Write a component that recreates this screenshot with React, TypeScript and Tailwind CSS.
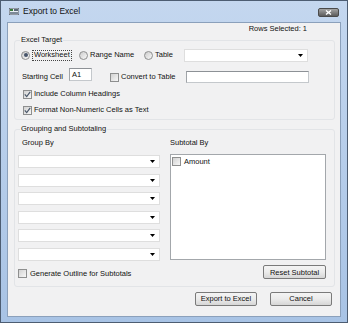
import React from "react";

function Check() {
  return (
    <svg width="7" height="7" viewBox="0 0 7 7">
      <path d="M0.8 3.4 L2.7 5.6 L6.2 0.9" fill="none" stroke="#4a586a" strokeWidth="1.2" />
    </svg>
  );
}

function CheckBox({ checked }: { checked?: boolean }) {
  return (
    <div className="w-[9px] h-[9px] shrink-0 border border-[#8e8f8f] bg-linear-to-br from-[#d2d2d2] to-[#f7f7f7] flex items-center justify-center">
      {checked && <Check />}
    </div>
  );
}

function Radio({ checked }: { checked?: boolean }) {
  return (
    <div className="w-[9px] h-[9px] shrink-0 rounded-full border border-[#8e8f8f] bg-linear-to-br from-[#cdcdcd] to-[#f8f8f8] flex items-center justify-center">
      {checked && <div className="w-[4px] h-[4px] rounded-full bg-[#46546a]" />}
    </div>
  );
}

function Arrow() {
  return (
    <svg width="5" height="3" viewBox="0 0 5 3">
      <path d="M0 0H5L2.5 3Z" fill="#000" />
    </svg>
  );
}

function Combo({ className }: { className: string }) {
  return (
    <div className={"h-[13px] bg-white border border-[#dedede] flex items-center justify-end pr-[4px] " + className}>
      <Arrow />
    </div>
  );
}

function Btn({ label, className }: { label: string; className: string }) {
  return (
    <div
      className={
        "h-[14px] rounded-[2px] border border-[#7a7a7a] bg-linear-to-b from-[#f4f4f4] via-[#ebebeb] to-[#d6d6d6] flex items-center justify-center leading-none " +
        className
      }
    >
      {label}
    </div>
  );
}

export default function App() {
  return (
    <div className="w-[348px] h-[323px] border border-[#4d5d72] bg-linear-to-b from-[#c4d7ef] to-[#a8c3e5] flex flex-col font-['Liberation_Sans',Arial,sans-serif] text-[7.5px] text-[#111]">
      {/* Title bar */}
      <div className="h-[21px] flex items-start shrink-0">
        <div className="flex items-center h-[21px] pl-[8px]">
          <svg width="10" height="7" viewBox="0 0 10 7" className="shrink-0">
            <rect x="0" y="0" width="10" height="7" fill="#e8eef4" stroke="#3c4654" strokeWidth="1" />
            <rect x="1" y="1" width="3" height="2" fill="#3a7a3a" />
            <rect x="5" y="1" width="4" height="2" fill="#5a6878" />
            <rect x="1" y="4" width="8" height="2" fill="#7d8a98" />
          </svg>
          <span className="ml-[4px] text-[8.5px] leading-none">Export to Excel</span>
        </div>
        <div className="ml-auto mt-[7px] mr-[8px] w-[21px] h-[9px] rounded-[2px] border border-[#4a4a4a] bg-linear-to-b from-[#a4a4a4] to-[#5c5c5c] flex items-center justify-center">
          <svg width="7" height="5" viewBox="0 0 7 5">
            <path d="M1 0.5 L6 4.5 M6 0.5 L1 4.5" stroke="#fff" strokeWidth="1.4" />
          </svg>
        </div>
      </div>

      {/* Frame + client */}
      <div className="flex-1 px-[6px] pb-[5px] flex flex-col">
        <div className="flex-1 border border-[#8ba0bb] bg-[#f1f1f2] flex flex-col">
          {/* Rows selected */}
          <div className="h-[12px] flex items-center justify-end pr-[33px] leading-none">Rows Selected: 1</div>

          {/* Excel Target */}
          <fieldset className="ml-[6px] mr-[5px] border border-[#e2e4e7] rounded-[3px] pb-[2px] min-w-0">
            <legend className="ml-[5px] px-[1px] h-[10px] leading-[10px]">Excel Target</legend>

            <div className="mt-[3px] h-[14px] flex items-center pl-[6px]">
              <div className="w-[58px] flex items-center">
                <Radio checked />
                <div className="ml-[2px] h-[11px] border border-dotted border-[#444] px-[1px] flex items-center leading-none">
                  Worksheet
                </div>
              </div>
              <div className="w-[65px] flex items-center">
                <Radio />
                <span className="ml-[2px] leading-none">Range Name</span>
              </div>
              <div className="w-[40px] flex items-center">
                <Radio />
                <span className="ml-[2px] leading-none">Table</span>
              </div>
              <Combo className="w-[124px]" />
            </div>

            <div className="mt-[8px] h-[14px] flex items-center pl-[7px]">
              <div className="w-[47px] leading-none">Starting Cell</div>
              <div className="w-[23px] h-[13px] mb-[5px] bg-white border border-[#c4c8cc] border-t-[#8d9196] border-l-[#a0a4a8] flex items-center pl-[2px] leading-none">
                A1
              </div>
              <div className="w-[18px]" />
              <div className="w-[76px] flex items-center">
                <CheckBox />
                <span className="ml-[2px] leading-none">Convert to Table</span>
              </div>
              <div className="w-[123px] h-[12px] bg-white border border-[#c4c8cc] border-t-[#8d9196] border-l-[#a0a4a8]" />
            </div>

            <div className="mt-[3px] h-[14px] flex items-center pl-[8px]">
              <CheckBox checked />
              <span className="ml-[2px] leading-none">Include Column Headings</span>
            </div>
            <div className="mt-[2px] h-[14px] flex items-center pl-[8px]">
              <CheckBox checked />
              <span className="ml-[2px] leading-none">Format Non-Numeric Cells as Text</span>
            </div>
          </fieldset>

          {/* Grouping and Subtotaling */}
          <fieldset className="mt-[4px] ml-[6px] mr-[5px] border border-[#e2e4e7] rounded-[3px] pb-[6px] min-w-0">
            <legend className="ml-[5px] px-[1px] h-[10px] leading-[10px]">Grouping and Subtotaling</legend>

            <div className="mt-[3px] h-[12px] flex items-center pl-[7px] leading-none">
              <div className="w-[148px]">Group By</div>
              <div>Subtotal By</div>
            </div>

            <div className="mt-[5px] flex items-start">
              <div className="ml-[3px] w-[142px] pt-[1px] flex flex-col gap-[5.6px]">
                <Combo className="w-[142px]" />
                <Combo className="w-[142px]" />
                <Combo className="w-[142px]" />
                <Combo className="w-[142px]" />
                <Combo className="w-[142px]" />
                <Combo className="w-[142px]" />
              </div>
              <div className="ml-[10px] w-[156px] h-[106px] bg-white border border-[#a3a7ab] pl-[1px] pt-[2px]">
                <div className="flex items-center h-[9px]">
                  <CheckBox />
                  <span className="ml-[3px] leading-none">Amount</span>
                </div>
              </div>
            </div>

            <div className="mt-[4px] h-[15px] flex items-center pl-[3px] pr-[8px]">
              <div className="flex items-center mt-[3px]">
                <CheckBox />
                <span className="ml-[3px] leading-none">Generate Outline for Subtotals</span>
              </div>
              <Btn label="Reset Subtotal" className="ml-auto w-[63px]" />
            </div>
          </fieldset>

          {/* Bottom buttons */}
          <div className="mt-[5px] flex justify-end gap-[13px] pr-[8px]">
            <Btn label="Export to Excel" className="w-[62px]" />
            <Btn label="Cancel" className="w-[62px]" />
          </div>
        </div>
      </div>
    </div>
  );
}
